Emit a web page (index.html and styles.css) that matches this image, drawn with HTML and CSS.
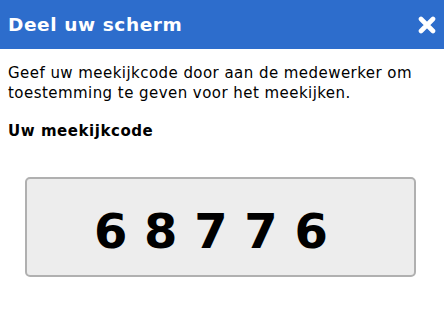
FILE: index.html
```html
<!DOCTYPE html>
<html lang="nl">
<head>
<meta charset="utf-8">
<title>Deel uw scherm</title>
<link rel="stylesheet" href="styles.css">
</head>
<body>
<div class="dialog">
  <header class="header">
    <h1 class="title">Deel uw scherm</h1>
    <button class="close" aria-label="Sluiten">
      <svg width="18" height="18" viewBox="0 0 18 18"><path d="M3 3 L15 15 M15 3 L3 15" stroke="#fff" stroke-width="4.6" stroke-linecap="round"/></svg>
    </button>
  </header>
  <div class="content">
    <p class="intro">Geef uw meekijkcode door aan de medewerker om toestemming te geven voor het meekijken.</p>
    <h2 class="label">Uw meekijkcode</h2>
    <div class="codebox"><span class="code">6 8 7 7 6</span></div>
  </div>
</div>
</body>
</html>
```

FILE: styles.css
```css
* { box-sizing: border-box; }
html, body { margin: 0; padding: 0; background: #fff; }
body { font-family: "DejaVu Sans", Verdana, sans-serif; color: #000; }
.dialog { width: 444px; height: 317px; overflow: hidden; }
.header {
  height: 49px;
  background: #2d6dcc;
  display: flex;
  align-items: center;
  justify-content: space-between;
  padding: 0 8px 0 8px;
}
.title { margin: 0; font-size: 18.5px; letter-spacing: 0.6px; font-weight: bold; color: #fff; }
.close { background: none; border: 0; padding: 0; width: 18px; height: 18px; display: flex; }
.content { padding: 14px 8px 0 8px; }
.intro { margin: 0; font-size: 15px; letter-spacing: 0.45px; line-height: 20px; }
.label { margin: 18px 0 0; font-size: 15px; letter-spacing: 0.55px; font-weight: bold; line-height: 20px; }
.codebox {
  margin: 36px 20px 0 17px;
  height: 100px;
  background: #ededed;
  border: 2px solid #b0b0b0;
  border-radius: 5px;
  display: flex;
  align-items: center;
  padding: 8px 0 0 67px;
}
.code { font-size: 48px; font-weight: bold; line-height: 1; white-space: pre; }
```
